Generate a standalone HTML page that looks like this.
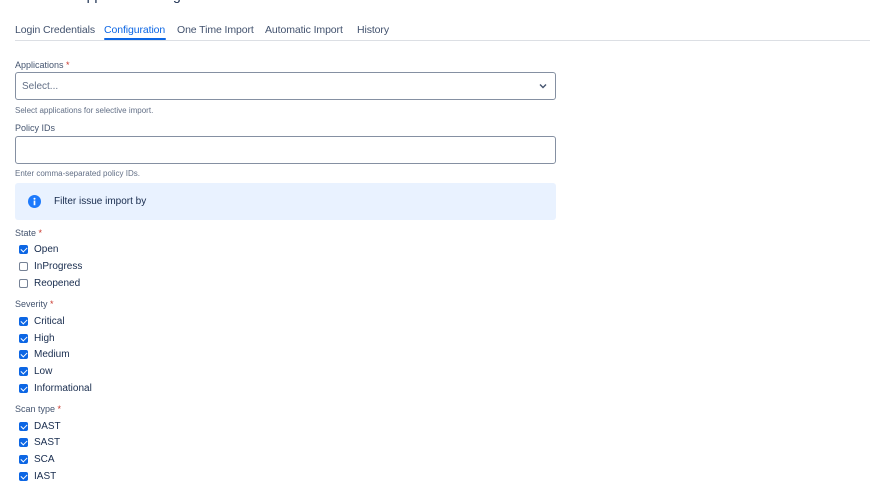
<!DOCTYPE html>
<html><head><style>
*{margin:0;padding:0;box-sizing:border-box}
body{width:870px;height:494px;background:#fff;font-family:"Liberation Sans",sans-serif;color:#172b4d;position:relative;overflow:hidden}
.a{position:absolute;white-space:nowrap}
.tab{font-size:10.5px;top:24px;color:#42526e;letter-spacing:-0.1px}
.lbl{font-size:9px;color:#44546f}
.help{font-size:8px;color:#626f86}
.inp{position:absolute;left:15px;width:541px;height:28px;border:1px solid #8590a2;border-radius:3px;background:#fff}
.cb{position:absolute;left:19px;width:9px;height:9px;border-radius:2px}
.on{background:#0c66e4}
.on:after{content:"";position:absolute;left:2.5px;top:1px;width:3px;height:5px;border:solid #fff;border-width:0 1.5px 1.5px 0;transform:rotate(45deg)}
.off{border:1px solid #758195;background:#fff}
.opt{font-size:10px;left:34px;color:#172b4d}
</style></head><body>
<div class="a" style="top:-13px;left:15px;font-size:14px;color:#172b4d">Veracode Application Integration</div>
<div class="a tab" style="left:15px">Login Credentials</div>
<div class="a tab" style="left:104px;color:#0c66e4">Configuration</div>
<div class="a tab" style="left:177px">One Time Import</div>
<div class="a tab" style="left:265px">Automatic Import</div>
<div class="a tab" style="left:357px">History</div>
<div class="a" style="left:15px;top:40px;width:855px;height:1px;background:#dcdfe4"></div>
<div class="a" style="left:104px;top:38px;width:62px;height:2px;background:#0c66e4;border-radius:1px"></div>

<div class="a lbl" style="left:15px;top:60px">Applications <span style="color:#c9372c">*</span></div>
<div class="inp" style="top:72px"><span class="a" style="left:6px;top:8px;font-size:10px;color:#626f86">Select...</span>
<svg class="a" style="right:8px;top:10px" width="8" height="6" viewBox="0 0 8 6"><path d="M1 1.5L4 4.5L7 1.5" fill="none" stroke="#44546f" stroke-width="1.4"/></svg></div>
<div class="a help" style="left:15px;top:106px">Select applications for selective import.</div>
<div class="a lbl" style="left:15px;top:123px">Policy IDs</div>
<div class="inp" style="top:136px"></div>
<div class="a help" style="left:15px;top:169px">Enter comma-separated policy IDs.</div>
<div class="a" style="left:15px;top:183px;width:541px;height:37px;background:#e9f2ff;border-radius:3px"></div>
<svg class="a" style="left:28px;top:195px" width="13" height="13" viewBox="0 0 14 14"><circle cx="7" cy="7" r="7" fill="#1d7afc"/><rect x="6.1" y="6" width="1.8" height="5" fill="#fff"/><circle cx="7" cy="4" r="1.1" fill="#fff"/></svg>
<div class="a" style="left:54px;top:196px;font-size:10px;color:#172b4d">Filter issue import by</div>

<div class="a lbl" style="left:15px;top:228px">State <span style="color:#c9372c">*</span></div>
<div class="cb on" style="top:245px"></div><div class="a opt" style="top:244px">Open</div>
<div class="cb off" style="top:262px"></div><div class="a opt" style="top:261px">InProgress</div>
<div class="cb off" style="top:279px"></div><div class="a opt" style="top:278px">Reopened</div>

<div class="a lbl" style="left:15px;top:299px">Severity <span style="color:#c9372c">*</span></div>
<div class="cb on" style="top:317px"></div><div class="a opt" style="top:316px">Critical</div>
<div class="cb on" style="top:334px"></div><div class="a opt" style="top:333px">High</div>
<div class="cb on" style="top:350px"></div><div class="a opt" style="top:349px">Medium</div>
<div class="cb on" style="top:367px"></div><div class="a opt" style="top:366px">Low</div>
<div class="cb on" style="top:384px"></div><div class="a opt" style="top:383px">Informational</div>

<div class="a lbl" style="left:15px;top:404px">Scan type <span style="color:#c9372c">*</span></div>
<div class="cb on" style="top:422px"></div><div class="a opt" style="top:421px">DAST</div>
<div class="cb on" style="top:438px"></div><div class="a opt" style="top:437px">SAST</div>
<div class="cb on" style="top:455px"></div><div class="a opt" style="top:454px">SCA</div>
<div class="cb on" style="top:472px"></div><div class="a opt" style="top:471px">IAST</div>
</body></html>
